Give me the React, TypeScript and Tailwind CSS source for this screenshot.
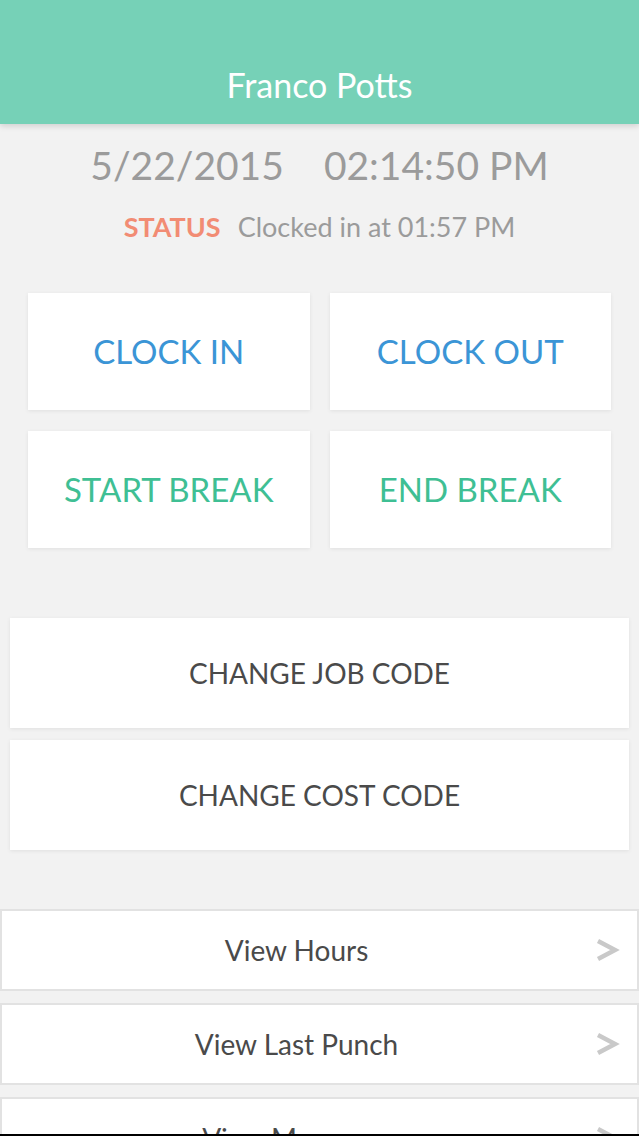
const font = { fontFamily: 'Lato, "Open Sans", sans-serif' }

function Chevron() {
  return (
    <svg width="26" height="28" viewBox="0 0 26 28" className="shrink-0">
      <polyline points="4,5 21,14 4,23" fill="none" stroke="#c9c9c9" strokeWidth="4.5" strokeLinejoin="miter" />
    </svg>
  )
}

function Tile({ label, color }: { label: string; color: string }) {
  return (
    <button className={`flex h-[117px] items-center justify-center bg-white text-[33px] shadow-[0_1px_4px_rgba(0,0,0,0.08)] ${color}`}>
      {label}
    </button>
  )
}

function WideButton({ label }: { label: string }) {
  return (
    <button className="flex h-[110px] w-full items-center justify-center bg-white text-[28px] text-[#4a4a4a] shadow-[0_1px_4px_rgba(0,0,0,0.08)]">
      {label}
    </button>
  )
}

function Row({ label }: { label: string }) {
  return (
    <div className="relative flex h-[82px] items-center justify-center border-2 border-[#e2e2e2] bg-white pr-[46px]">
      <span className="text-[28px] text-[#4a4a4a]">{label}</span>
      <span className="absolute right-[17px] top-1/2 -translate-y-1/2">
        <Chevron />
      </span>
    </div>
  )
}

export default function App() {
  return (
    <div style={font} className="flex h-[1136px] w-[639px] flex-col overflow-hidden bg-[#f2f2f2]">
      <div className="min-h-0 flex-1 overflow-hidden">
        <header className="relative z-10 flex h-[124px] items-center justify-center bg-[#76d1b7] pt-[44px] shadow-[0_2px_6px_rgba(0,0,0,0.15)]">
          <h1 className="text-[34px] text-white">Franco Potts</h1>
        </header>

        <div className="mt-[17px] flex justify-center gap-[40px] text-[39px] leading-[48px] text-[#9b9b9b]">
          <span>5/22/2015</span>
          <span>02:14:50 PM</span>
        </div>
        <div className="mt-[20px] flex justify-center gap-[17px] text-[27px] leading-[36px]">
          <span className="font-bold text-[#f28c74]">STATUS</span>
          <span className="text-[#9b9b9b]">Clocked in at 01:57 PM</span>
        </div>

        <div className="mt-[48px] grid grid-cols-2 gap-x-[20px] gap-y-[21px] px-[28px]">
          <Tile label="CLOCK IN" color="text-[#3b95d6]" />
          <Tile label="CLOCK OUT" color="text-[#3b95d6]" />
          <Tile label="START BREAK" color="text-[#3fbf94]" />
          <Tile label="END BREAK" color="text-[#3fbf94]" />
        </div>

        <div className="mt-[70px] flex flex-col gap-[12px] px-[10px]">
          <WideButton label="CHANGE JOB CODE" />
          <WideButton label="CHANGE COST CODE" />
        </div>

        <div className="mt-[59px] flex flex-col gap-[12px]">
          <Row label="View Hours" />
          <Row label="View Last Punch" />
          <Row label="View Messages" />
        </div>
      </div>
      <div className="h-[2px] bg-black" />
    </div>
  )
}
